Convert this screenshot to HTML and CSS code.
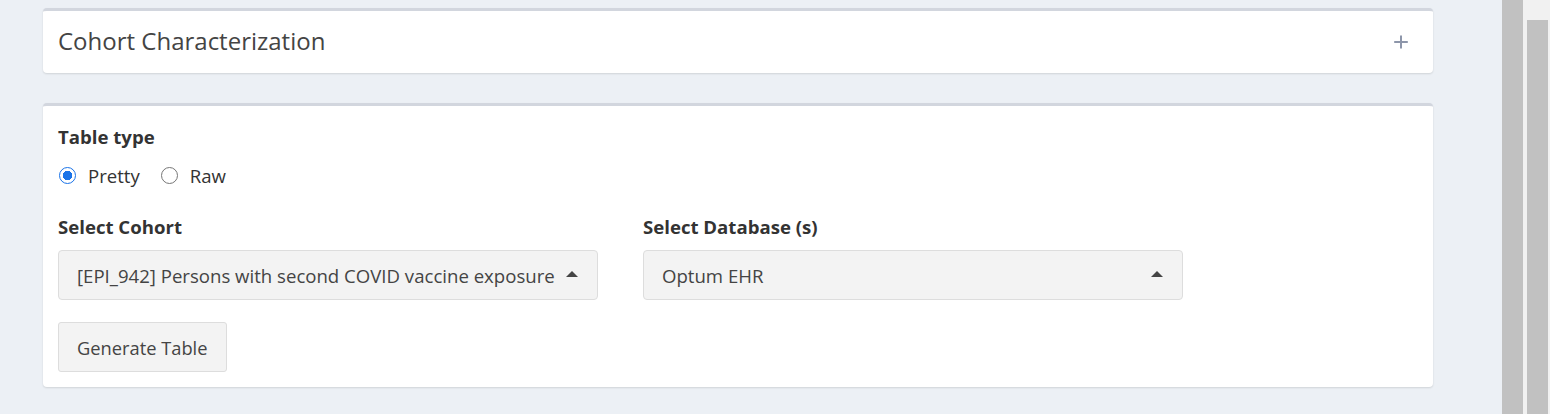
FILE: index.html
```html
<!DOCTYPE html>
<html>
<head>
<meta charset="utf-8">
<link rel="stylesheet" href="styles.css">
</head>
<body>
<div class="main">
  <div class="box box-collapsed">
    <div class="box-header">
      <h3 class="box-title">Cohort Characterization</h3>
      <svg class="plus" width="16" height="16" viewBox="0 0 16 16"><path d="M8 1.5V14.5M1.2 8H14.8" stroke="#8d96aa" stroke-width="2" fill="none"/></svg>
    </div>
  </div>
  <div class="box">
    <div class="box-body">
      <div class="label">Table type</div>
      <div class="radios">
        <span class="radio"><span class="dot checked"></span>Pretty</span>
        <span class="radio"><span class="dot"></span>Raw</span>
      </div>
      <div class="cols">
        <div class="col">
          <div class="label">Select Cohort</div>
          <div class="select"><span class="select-text">[EPI_942] Persons with second COVID vaccine exposure</span><span class="caret"></span></div>
        </div>
        <div class="col">
          <div class="label">Select Database (s)</div>
          <div class="select"><span class="select-text">Optum EHR</span><span class="caret"></span></div>
        </div>
      </div>
      <button class="btn">Generate Table</button>
    </div>
  </div>
</div>
<div class="scrollbars">
  <div class="bar-outer"></div>
  <div class="track"><div class="thumb"></div></div>
</div>
</body>
</html>
```

FILE: styles.css
```css
html, body {
  margin: 0;
  padding: 0;
  height: 100%;
}
body {
  display: flex;
  min-height: 414px;
  background: #ecf0f5;
  font-family: "Open Sans", "Liberation Sans", sans-serif;
  color: #333;
  overflow: hidden;
}
.main {
  flex: 1;
  padding: 8px 69px 0 43px;
}
.box {
  background: #fff;
  border-top: 3px solid #d2d6de;
  border-radius: 4px;
  box-shadow: 0 1px 2px rgba(0,0,0,0.12);
  margin-bottom: 30px;
}
.box-header {
  height: 62px;
  display: flex;
  align-items: center;
  justify-content: space-between;
  padding: 0 24px 0 15px;
}
.box-title {
  margin: 0;
  font-weight: 400;
  font-size: 24px;
  color: #444;
  line-height: 30px;
  margin-top: -2px;
}
.plus {
  display: block;
  margin-top: -1px;
}
.box-body {
  padding: 19px 15px 15px;
}
.label {
  font-weight: 700;
  font-size: 18.6px;
  line-height: 24px;
  color: #333;
}
.radios {
  display: flex;
  gap: 20px;
  margin-top: 14px;
  height: 24px;
  align-items: center;
  font-size: 18.6px;
  color: #333;
}
.radio {
  display: flex;
  align-items: center;
}
.dot {
  width: 17px;
  height: 17px;
  border: 1.5px solid #767676;
  border-radius: 50%;
  margin: 0 12px 0 1px;
  box-sizing: border-box;
  display: inline-block;
}
.dot.checked {
  border: 1.5px solid #1a73e8;
  background: radial-gradient(circle, #1a73e8 0 4.5px, #fff 5px);
}
.cols {
  display: flex;
  gap: 45px;
  margin-top: 28px;
}
.col {
  width: 540px;
}
.select {
  margin-top: 11px;
  height: 50px;
  box-sizing: border-box;
  background: #f3f3f3;
  border: 1px solid #ddd;
  border-radius: 4px;
  display: flex;
  align-items: center;
  justify-content: space-between;
  padding: 0 19px 0 18px;
  font-size: 18.6px;
  color: #444;
}
.select-text {
  white-space: nowrap;
}
.caret {
  width: 0;
  height: 0;
  border-left: 6px solid transparent;
  border-right: 6px solid transparent;
  border-bottom: 6px solid #444;
  margin-top: -2px;
}
.btn {
  margin-top: 22px;
  height: 50px;
  padding: 0 18px;
  background: #f3f3f3;
  border: 1px solid #ddd;
  border-radius: 3px;
  font-family: inherit;
  font-size: 18.3px;
  color: #444;
  display: block;
}
.scrollbars {
  width: 48px;
  display: flex;
  flex-shrink: 0;
}
.bar-outer {
  width: 21px;
  background: #c1c1c1;
}
.track {
  width: 27px;
  background: #f1f1f1;
  padding: 20px 2px 0 4px;
  box-sizing: border-box;
  display: flex;
}
.thumb {
  flex: 1;
  background: #c1c1c1;
}
```
